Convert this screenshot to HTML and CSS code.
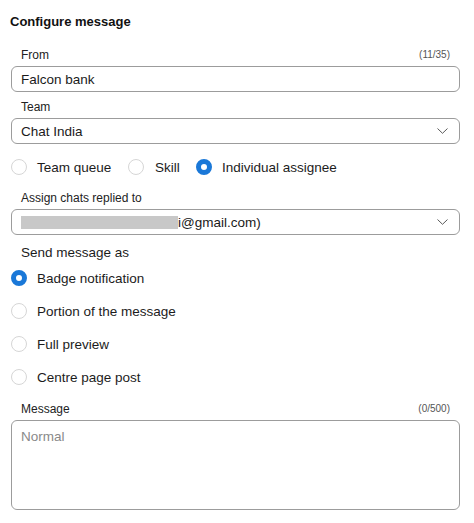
FILE: index.html
```html
<!DOCTYPE html>
<html lang="en">
<head>
<meta charset="utf-8">
<title>Configure message</title>
<link rel="stylesheet" href="styles.css">
</head>
<body>
<div class="panel">
  <h1 class="title">Configure message</h1>

  <div class="field field-from">
    <div class="label-row"><span class="label">From</span><span class="counter">(11/35)</span></div>
    <div class="box"><span class="value">Falcon bank</span></div>
  </div>

  <div class="field field-team">
    <div class="label-row"><span class="label">Team</span></div>
    <div class="box select"><span class="value">Chat India</span>
      <svg class="chev" width="11" height="6" viewBox="0 0 11 6"><path d="M0.5 0.5 L5.5 5.3 L10.5 0.5" fill="none" stroke="#5a5a5a" stroke-width="1"/></svg>
    </div>
  </div>

  <div class="radio-row">
    <div class="radio"><span class="dot"></span><span class="rlabel">Team queue</span></div>
    <div class="radio"><span class="dot"></span><span class="rlabel">Skill</span></div>
    <div class="radio"><span class="dot on"></span><span class="rlabel">Individual assignee</span></div>
  </div>

  <div class="field field-assign">
    <div class="label-row"><span class="label">Assign chats replied to</span></div>
    <div class="box select"><span class="value"><span class="redact"></span>i@gmail.com)</span>
      <svg class="chev" width="11" height="6" viewBox="0 0 11 6"><path d="M0.5 0.5 L5.5 5.3 L10.5 0.5" fill="none" stroke="#5a5a5a" stroke-width="1"/></svg>
    </div>
  </div>

  <div class="send-label">Send message as</div>
  <div class="radio-col">
    <div class="radio"><span class="dot on"></span><span class="rlabel">Badge notification</span></div>
    <div class="radio"><span class="dot"></span><span class="rlabel">Portion of the message</span></div>
    <div class="radio"><span class="dot"></span><span class="rlabel">Full preview</span></div>
    <div class="radio"><span class="dot"></span><span class="rlabel">Centre page post</span></div>
  </div>

  <div class="field field-message">
    <div class="label-row"><span class="label">Message</span><span class="counter">(0/500)</span></div>
    <div class="box textarea"><span class="placeholder">Normal</span></div>
  </div>
</div>
</body>
</html>
```

FILE: styles.css
```css
* { box-sizing: border-box; }
html, body { margin: 0; padding: 0; background: #fff; }
body {
  font-family: "Liberation Sans", Arial, sans-serif;
  color: #1c1c1c;
}
.panel {
  width: 474px;
  padding: 14px 14px 0 11px;
  display: flex;
  flex-direction: column;
}
.title {
  margin: 0 0 0 -1px;
  font-size: 13px;
  line-height: 16px;
  font-weight: bold;
  color: #111;
}
.field { display: flex; flex-direction: column; gap: 4px; }
.field-from { margin-top: 18px; }
.field-team { margin-top: 8px; }
.field-assign { margin-top: 14px; }
.field-message { margin-top: 15px; }
.label-row {
  display: flex;
  justify-content: space-between;
  align-items: center;
  padding: 0 10px 0 10px;
  height: 14px;
}
.label { font-size: 12px; line-height: 14px; color: #222; }
.counter { font-size: 10px; line-height: 14px; color: #555; }
.box {
  height: 26px;
  border: 1px solid #9c9c9c;
  border-radius: 6px;
  padding: 0 9px;
  display: flex;
  align-items: center;
  justify-content: space-between;
}
.value { font-size: 13.5px; color: #1a1a1a; display: flex; align-items: center; }
.chev { margin-right: 2px; }
.redact {
  display: inline-block;
  width: 157px;
  height: 13px;
  background: #c8c8c8;
}
.radio-row {
  margin-top: 13px;
  display: flex;
  align-items: center;
  height: 20px;
}
.radio {
  display: flex;
  align-items: center;
  height: 20px;
  gap: 10px;
}
.radio-row .radio:nth-child(1) { width: 117px; }
.radio-row .radio:nth-child(2) { width: 68px; gap: 11px; }
.dot {
  width: 16px;
  height: 16px;
  border-radius: 50%;
  border: 1px solid #d6d6d6;
  background: #fff;
  flex: none;
}
.dot.on { border: 5px solid #1a78d8; }
.rlabel { font-size: 13.5px; color: #1c1c1c; }
.send-label {
  margin-top: 10px;
  padding-left: 10px;
  font-size: 13.5px;
  line-height: 16px;
  color: #1c1c1c;
}
.radio-col {
  margin-top: 7px;
  display: flex;
  flex-direction: column;
  gap: 13px;
}
.textarea {
  height: 90px;
  align-items: flex-start;
  padding-top: 8px;
}
.placeholder { font-size: 13.5px; line-height: 16px; color: #8a8a8a; }
```
